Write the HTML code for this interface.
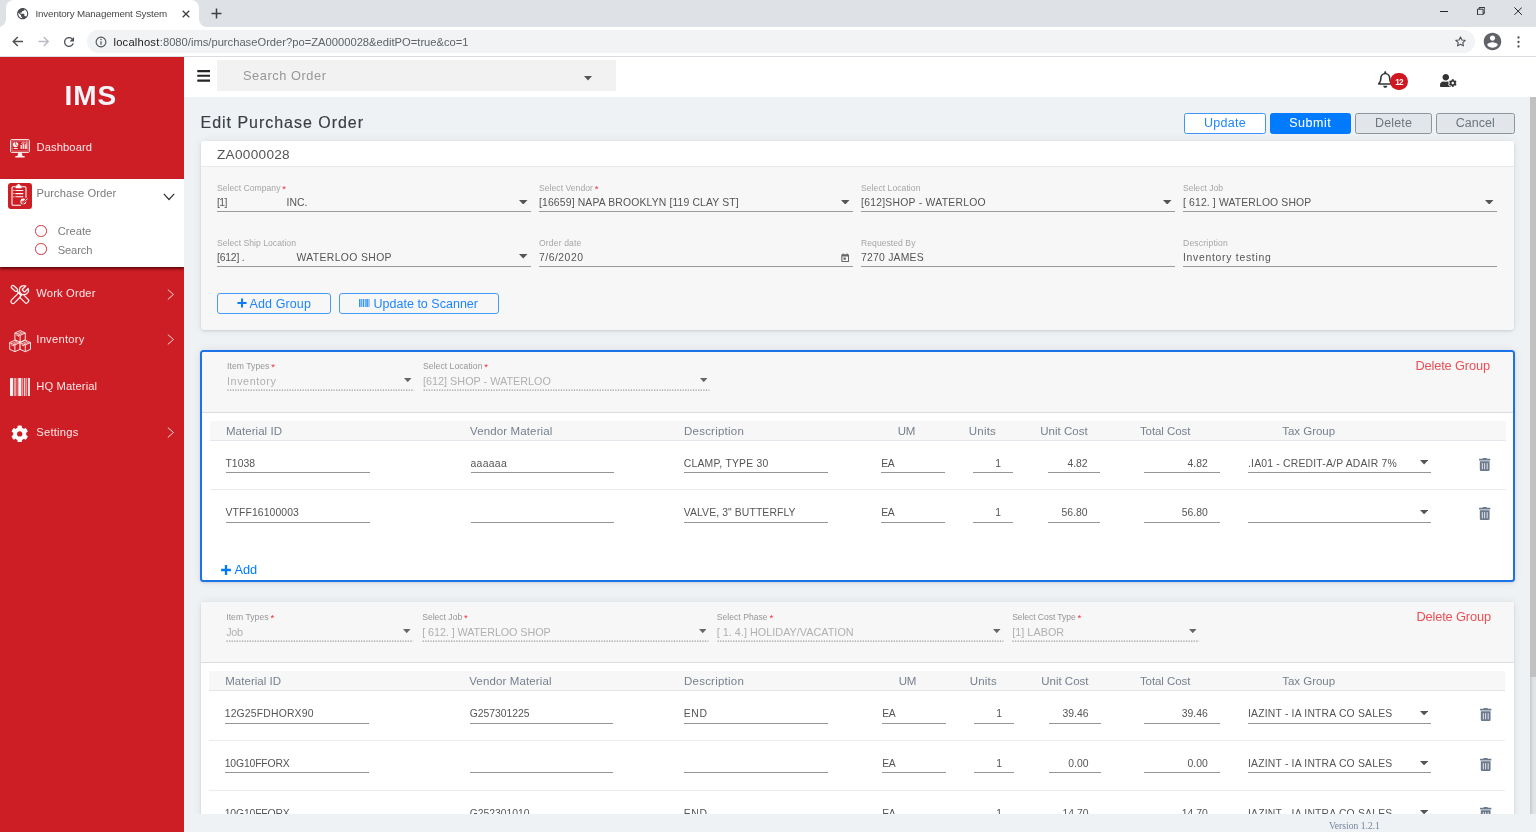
<!DOCTYPE html>
<html lang="en">
<head>
<meta charset="utf-8">
<title>Inventory Management System</title>
<style>
*{box-sizing:border-box;margin:0;padding:0}
html,body{width:1536px;height:832px;overflow:hidden;background:#eff2f5}
body{position:relative;font-family:"Liberation Sans",sans-serif;}
.t{position:absolute;white-space:nowrap;}
.ser{font-family:"Liberation Serif",serif}
</style>
</head>
<body>
<div id="root" style="position:absolute;left:0;top:0;width:1536px;height:832px;will-change:transform">
<div id="chrome" style="position:absolute;left:0;top:0;width:1536px;height:57px;background:#fff">
<div style="position:absolute;left:0px;top:0px;width:1536px;height:27px;background:#dee1e6"></div>
<div style="position:absolute;left:6px;top:0px;width:193px;height:27px;background:#fff;border-radius:8px 8px 0 0"></div>
<svg style="position:absolute;left:-2px;top:19px;" width="8" height="8" viewBox="0 0 8 8"><path d="M8 0 V8 H0 A8 8 0 0 0 8 0Z" fill="#fff"/></svg>
<svg style="position:absolute;left:199px;top:19px;" width="8" height="8" viewBox="0 0 8 8"><path d="M0 0 V8 H8 A8 8 0 0 1 0 0Z" fill="#fff"/></svg>
<svg style="position:absolute;left:15.8px;top:6.9px;" width="13.4" height="13.4" viewBox="0 0 24 24"><path fill="#4a4d51" d="M12 2C6.48 2 2 6.48 2 12s4.48 10 10 10 10-4.480 10-10S17.52 2 12 2zm-1 17.930c-3.950-.490-7-3.850-7-7.930 0-.620.080-1.210.210-1.790L9 15v1c0 1.100.9 2 2 2v1.930zm6.900-2.540c-.260-.810-1-1.390-1.900-1.390h-1v-3c0-.550-.450-1-1-1H8v-2h2c.550 0 1-.450 1-1V7h2c1.100 0 2-.9 2-2v-.410c2.930 1.190 5 4.060 5 7.410 0 2.080-.8 3.970-2.100 5.390z"/></svg>
<div class="t" style="top:9px;font-size:9.8px;line-height:9.8px;color:#45474a;letter-spacing:-0.153px;left:35.5px;">Inventory Management System</div>
<svg style="position:absolute;left:181.5px;top:9.5px;" width="8" height="8" viewBox="0 0 8 8"><path d="M0.700 0.700 L7.300 7.300 M7.300 0.700 L0.700 7.300" stroke="#3c4043" stroke-width="1.300" fill="none"/></svg>
<svg style="position:absolute;left:210.5px;top:8px;" width="11" height="11" viewBox="0 0 11 11"><path d="M5.500 0.500 V10.500 M0.500 5.500 H10.500" stroke="#3c4043" stroke-width="1.500" fill="none"/></svg>
<svg style="position:absolute;left:1440px;top:10px;" width="8.2" height="3" viewBox="0 0 10 3"><path d="M0 1.500 H10" stroke="#222" stroke-width="1.200"/></svg>
<svg style="position:absolute;left:1476.8px;top:7px;" width="8.3" height="8.3" viewBox="0 0 10 10"><path d="M0.600 2.600 H7.400 V9.400 H0.600Z M2.600 2.600 V0.600 H9.400 V7.400 H7.400" stroke="#222" stroke-width="1.100" fill="none"/></svg>
<svg style="position:absolute;left:1513.7px;top:7.2px;" width="8.3" height="8.3" viewBox="0 0 10 10"><path d="M0.500 0.500 L9.500 9.500 M9.500 0.500 L0.500 9.500" stroke="#222" stroke-width="1.200" fill="none"/></svg>
<div style="position:absolute;left:0px;top:56px;width:1536px;height:1px;background:#d9dce0"></div>
<svg style="position:absolute;left:12px;top:36px;" width="11.5" height="11" viewBox="0 0 12 11"><path d="M11.500 5.500 H1.500 M6 0.800 L1.300 5.500 L6 10.200" stroke="#4d5156" stroke-width="1.500" fill="none"/></svg>
<svg style="position:absolute;left:38px;top:36px;" width="11.5" height="11" viewBox="0 0 12 11"><path d="M0.500 5.500 H10.500 M6 0.800 L10.700 5.500 L6 10.200" stroke="#b9bcc0" stroke-width="1.500" fill="none"/></svg>
<svg style="position:absolute;left:63px;top:35.5px;" width="12" height="12" viewBox="0 0 24 24"><path fill="#4d5156" d="M17.650 6.350C16.200 4.900 14.210 4 12 4c-4.420 0-7.990 3.580-7.990 8s3.570 8 7.990 8c3.730 0 6.840-2.550 7.730-6h-2.080c-.820 2.330-3.040 4-5.650 4-3.310 0-6-2.690-6-6s2.690-6 6-6c1.660 0 3.140.690 4.220 1.780L13 11h7V4l-2.350 2.350z" transform="translate(-3 -3) scale(1.25)"/></svg>
<div style="position:absolute;left:86.5px;top:30px;width:1388px;height:23px;background:#f1f3f4;border-radius:11.5px"></div>
<svg style="position:absolute;left:94.5px;top:35.5px;" width="12" height="12" viewBox="0 0 12 12"><circle cx="6" cy="6" r="4.900" fill="none" stroke="#4d5156" stroke-width="1.100"/><path d="M6 5.300 V8.700" stroke="#4d5156" stroke-width="1.200"/><circle cx="6" cy="3.600" r="0.750" fill="#4d5156"/></svg>
<div class="t" style="top:37px;font-size:11.2px;line-height:11.2px;color:#202124;letter-spacing:0.199px;left:113.5px;">localhost</div>
<div class="t" style="top:37px;font-size:11.2px;line-height:11.2px;color:#5f6368;left:159.8px;">:8080/ims/purchaseOrder?po=ZA0000028&amp;editPO=true&amp;co=1</div>
<svg style="position:absolute;left:1454px;top:35px;" width="13" height="13" viewBox="0 0 24 24"><path fill="none" stroke="#4d5156" stroke-width="2" stroke-linejoin="round" d="M12 3.500l2.600 5.600 6.100.700-4.500 4.200 1.200 6.100L12 17.100 6.600 20.100l1.200-6.100L3.300 9.800l6.100-.700z"/></svg>
<svg style="position:absolute;left:1482.4px;top:31.2px;" width="21" height="21" viewBox="0 0 24 24"><path fill="#5f6368" d="M12 2C6.480 2 2 6.480 2 12s4.480 10 10 10 10-4.480 10-10S17.520 2 12 2zm0 3c1.660 0 3 1.340 3 3s-1.340 3-3 3-3-1.340-3-3 1.340-3 3-3zm0 14.200c-2.500 0-4.710-1.280-6-3.220.030-1.990 4-3.080 6-3.080 1.990 0 5.970 1.090 6 3.080-1.290 1.940-3.500 3.220-6 3.220z"/></svg>
<svg style="position:absolute;left:1517px;top:36px;" width="3" height="12" viewBox="0 0 3 12"><circle cx="1.500" cy="1.500" r="1.150" fill="#4d5156"/><circle cx="1.500" cy="6" r="1.150" fill="#4d5156"/><circle cx="1.500" cy="10.500" r="1.150" fill="#4d5156"/></svg>
</div>
<nav id="sidebar" style="position:absolute;left:0;top:57px;width:184px;height:775px;background:#cd1e25;overflow:hidden">
<div style="position:absolute;left:0px;top:121.5px;width:184px;height:88px;background:#fff;box-shadow:0 1.500px 2.500px rgba(60,0,0,.75)"></div>
</nav>
<h1 class="t" style="top:82px;font-size:28px;line-height:28px;color:#f1f5f9;letter-spacing:0.906px;font-weight:bold;left:64.5px;font-weight:bold;">IMS</h1>
<div class="t" style="top:142px;font-size:11.2px;line-height:11.2px;color:#fbe9ea;letter-spacing:0.106px;left:36.5px;">Dashboard</div>
<div style="position:absolute;left:8px;top:183px;width:24px;height:26px;background:#cd1e25;border-radius:3px"></div>
<div class="t" style="top:188px;font-size:11.2px;line-height:11.2px;color:#7b7b7b;letter-spacing:0.067px;left:36.5px;">Purchase Order</div>
<div class="t" style="top:226px;font-size:11.2px;line-height:11.2px;color:#7b7b7b;letter-spacing:-0.020px;left:57.75px;">Create</div>
<div class="t" style="top:245px;font-size:11.2px;line-height:11.2px;color:#7b7b7b;letter-spacing:-0.165px;left:57.75px;">Search</div>
<div style="position:absolute;left:35px;top:225px;width:11.5px;height:11.5px;border:1.200px solid #d5333b;border-radius:50%"></div>
<div style="position:absolute;left:35px;top:243.3px;width:11.5px;height:11.5px;border:1.200px solid #d5333b;border-radius:50%"></div>
<svg style="position:absolute;left:162.5px;top:192.5px;" width="12" height="8" viewBox="0 0 12 8"><path d="M0.800 0.800 L6 6.500 L11.200 0.800" stroke="#333" stroke-width="1.200" fill="none"/></svg>
<div class="t" style="top:288px;font-size:11.2px;line-height:11.2px;color:#fbe9ea;letter-spacing:0.173px;left:36.25px;">Work Order</div>
<div class="t" style="top:334px;font-size:11.2px;line-height:11.2px;color:#fbe9ea;letter-spacing:0.270px;left:36.25px;">Inventory</div>
<div class="t" style="top:381px;font-size:11.2px;line-height:11.2px;color:#fbe9ea;letter-spacing:0.114px;left:36.25px;">HQ Material</div>
<div class="t" style="top:427px;font-size:11.2px;line-height:11.2px;color:#fbe9ea;letter-spacing:0.223px;left:36.25px;">Settings</div>
<svg style="position:absolute;left:167px;top:288.5px;" width="7.5" height="11" viewBox="0 0 7.500 11"><path d="M0.800 0.600 L6.500 5.500 L0.800 10.400" stroke="#f6d6d8" stroke-width="1" fill="none"/></svg>
<svg style="position:absolute;left:167px;top:334.0px;" width="7.5" height="11" viewBox="0 0 7.500 11"><path d="M0.800 0.600 L6.500 5.500 L0.800 10.400" stroke="#f6d6d8" stroke-width="1" fill="none"/></svg>
<svg style="position:absolute;left:167px;top:427.0px;" width="7.5" height="11" viewBox="0 0 7.500 11"><path d="M0.800 0.600 L6.500 5.500 L0.800 10.400" stroke="#f6d6d8" stroke-width="1" fill="none"/></svg>
<div style="position:absolute;left:184px;top:57px;width:1352px;height:40px;background:#fff"></div>
<div style="position:absolute;left:217px;top:60px;width:399px;height:31px;background:#f2f2f2"></div>
<svg style="position:absolute;left:196.8px;top:69px;" width="13.6" height="13" viewBox="0 0 13.600 13"><g fill="#262626"><rect x="0.200" y="1.100" width="13.200" height="2.050" rx="0.600"/><rect x="0.200" y="5.800" width="13.200" height="2.050" rx="0.600"/><rect x="0.200" y="10.600" width="13.200" height="2.050" rx="0.600"/></g></svg>
<div class="t" style="top:70px;font-size:12.8px;line-height:12.8px;color:#979797;letter-spacing:0.555px;left:243px;">Search Order</div>
<svg style="position:absolute;left:584px;top:76px;" width="8" height="4.5" viewBox="0 0 8 4.500"><path d="M0 0 H8 L4 4.500Z" fill="#555"/></svg>
<svg style="position:absolute;left:1378px;top:70.5px;" width="14.5" height="17" viewBox="0 0 448 512"><path fill="#333" d="M439.390 362.290c-19.320-20.760-55.470-51.990-55.470-154.290 0-77.700-54.480-139.900-127.940-155.160V32c0-17.670-14.320-32-31.980-32s-31.980 14.330-31.980 32v20.840C118.560 68.100 64.080 130.300 64.080 208c0 102.300-36.150 133.530-55.470 154.290-6 6.450-8.660 14.160-8.610 21.710.110 16.400 12.980 32 32.100 32h383.800c19.120 0 32-15.600 32.100-32 .050-7.550-2.610-15.270-8.610-21.710zM67.530 368c21.220-27.970 44.420-74.330 44.530-159.420 0-.200-.060-.380-.060-.580 0-61.860 50.140-112 112-112s112 50.140 112 112c0 .200-.060.380-.060.580.110 85.100 23.310 131.460 44.530 159.420H67.530zM224 512c35.320 0 63.970-28.650 63.970-64H160.030c0 35.350 28.650 64 63.970 64z"/></svg>
<div style="position:absolute;left:1390.2px;top:72.8px;width:17.6px;height:17.6px;background:#d0161f;border-radius:50%"></div>
<div class="t" style="top:79px;font-size:8.2px;line-height:8.2px;color:#fff;letter-spacing:-0.600px;font-weight:bold;left:1099.1px;width:600px;text-align:center;">12</div>
<svg style="position:absolute;left:1440px;top:73.5px;" width="16.5" height="13.2" viewBox="0 0 640 512"><path fill="#333" d="M610.500 373.300c2.600-14.100 2.600-28.500 0-42.600l25.800-14.900c3-1.700 4.300-5.200 3.300-8.500-6.700-21.600-18.200-41.200-33.200-57.400-2.300-2.500-6-3.100-9-1.400l-25.800 14.900c-10.900-9.300-23.400-16.500-36.900-21.300v-29.800c0-3.400-2.400-6.400-5.700-7.100-22.300-5-45-4.800-66.200 0-3.300.7-5.700 3.700-5.700 7.100v29.800c-13.500 4.800-26 12-36.900 21.300l-25.800-14.900c-2.900-1.700-6.700-1.100-9 1.400-15 16.200-26.500 35.800-33.200 57.400-1 3.300.4 6.800 3.300 8.500l25.800 14.900c-2.600 14.100-2.600 28.500 0 42.600l-25.800 14.900c-3 1.700-4.300 5.200-3.300 8.500 6.700 21.600 18.200 41.100 33.200 57.400 2.300 2.500 6 3.100 9 1.400l25.800-14.900c10.900 9.300 23.400 16.500 36.900 21.300v29.800c0 3.400 2.400 6.400 5.700 7.100 22.300 5 45 4.800 66.200 0 3.300-.7 5.700-3.700 5.700-7.100v-29.800c13.500-4.800 26-12 36.900-21.300l25.800 14.900c2.900 1.700 6.700 1.100 9-1.400 15-16.200 26.500-35.800 33.200-57.400 1-3.300-.4-6.800-3.300-8.500l-25.800-14.900zM496 400.500c-26.800 0-48.500-21.800-48.500-48.500s21.800-48.500 48.500-48.500 48.500 21.800 48.500 48.500-21.700 48.500-48.500 48.500zM224 256c70.700 0 128-57.300 128-128S294.700 0 224 0 96 57.300 96 128s57.300 128 128 128zm201.200 226.500c-2.300-1.200-4.600-2.600-6.800-3.900l-7.900 4.600c-6 3.400-12.800 5.300-19.600 5.300-10.900 0-21.400-4.600-28.900-12.600-18.300-19.800-32.300-43.900-40.200-69.600-5.500-17.700 1.900-36.400 17.900-45.700l7.900-4.600c-.1-2.600-.1-5.200 0-7.800l-7.900-4.600c-16-9.200-23.400-28-17.900-45.700.9-2.900 2.200-5.800 3.200-8.700-3.800-.3-7.500-1.200-11.400-1.200h-16.700c-22.200 10.200-46.900 16-72.900 16s-50.600-5.800-72.900-16h-16.700C60.200 288 0 348.200 0 422.400V464c0 26.500 21.500 48 48 48h352c10.100 0 19.500-3.200 27.200-8.500-1.200-3.800-2-7.700-2-11.800v-9.200z"/></svg>
<div style="position:absolute;left:1530.3px;top:97px;width:5.7px;height:717px;background:linear-gradient(90deg,#c6c7ca 0,#d2d4d7 1.500px,#dee1e5 3px,#e0e3e7 100%)"></div>
<div style="position:absolute;left:1530.3px;top:97px;width:5.7px;height:580px;background:#c1c1c1"></div>
<h2 class="t" style="top:115px;font-size:16px;line-height:16px;color:#3b3f44;letter-spacing:0.976px;left:200.5px;font-weight:normal;-webkit-text-stroke:0.180px #3b3f44;">Edit Purchase Order</h2>
<div style="position:absolute;left:1184px;top:112.5px;width:82px;height:21px;background:#fff;border:1px solid #3d95fc;border-radius:2.500px"></div>
<div class="t" style="top:117px;font-size:12.5px;line-height:12.5px;color:#1c85ff;letter-spacing:0.282px;left:925.0px;width:600px;text-align:center;">Update</div>
<div style="position:absolute;left:1269.5px;top:112.5px;width:81.5px;height:21px;background:#007bff;border:1px solid #007bff;border-radius:2.500px"></div>
<div class="t" style="top:117px;font-size:12.5px;line-height:12.5px;color:#fff;letter-spacing:0.516px;left:1010.25px;width:600px;text-align:center;-webkit-text-stroke:0.060px #fff;">Submit</div>
<div style="position:absolute;left:1355px;top:112.5px;width:77px;height:21px;background:#e2e6ea;border:1px solid #8d949b;border-radius:2.500px"></div>
<div class="t" style="top:117px;font-size:12.5px;line-height:12.5px;color:#6c757d;letter-spacing:0.144px;left:1093.5px;width:600px;text-align:center;">Delete</div>
<div style="position:absolute;left:1436px;top:112.5px;width:78.5px;height:21px;background:#e2e6ea;border:1px solid #8d949b;border-radius:2.500px"></div>
<div class="t" style="top:117px;font-size:12.5px;line-height:12.5px;color:#6c757d;letter-spacing:0.015px;left:1175.25px;width:600px;text-align:center;">Cancel</div>
<div style="position:absolute;left:201px;top:141px;width:1313px;height:188.5px;background:#f7f7f7;border-radius:3px;box-shadow:0 1px 3px rgba(0,0,0,.13),0 0 10px rgba(0,0,0,.07)"></div>
<div style="position:absolute;left:201px;top:141px;width:1313px;height:26px;background:#fff;border-radius:3px 3px 0 0;border-bottom:1px solid #e9e9e9"></div>
<div class="t" style="top:148px;font-size:13.6px;line-height:13.6px;color:#555;letter-spacing:0.297px;left:217px;">ZA0000028</div>
<div class="t" style="top:184px;font-size:8.6px;line-height:8.6px;color:#a6a6a6;letter-spacing:0.029px;left:217px;">Select Company</div>
<div class="t" style="top:184px;font-size:9.5px;line-height:9.5px;color:#ee3239;left:282.3px;">*</div>
<div class="t" style="top:198px;font-size:10.4px;line-height:10.4px;color:#555;letter-spacing:-0.521px;left:217px;">[1]</div>
<div class="t" style="top:198px;font-size:10.4px;line-height:10.4px;color:#555;letter-spacing:0.050px;left:286.5px;">INC.</div>
<div style="position:absolute;left:217px;top:211px;width:314px;height:1px;background:#999"></div>
<svg style="position:absolute;left:519px;top:199.8px;" width="8.5" height="4.5" viewBox="0 0 8.500 4.500"><path d="M0 0 H8.500 L4.250 4.500Z" fill="#555"/></svg>
<div class="t" style="top:184px;font-size:8.6px;line-height:8.6px;color:#a6a6a6;letter-spacing:0.035px;left:539px;">Select Vendor</div>
<div class="t" style="top:184px;font-size:9.5px;line-height:9.5px;color:#ee3239;left:594.8px;">*</div>
<div class="t" style="top:198px;font-size:10.4px;line-height:10.4px;color:#555;letter-spacing:0.143px;left:539px;">[16659] NAPA BROOKLYN [119 CLAY ST]</div>
<div style="position:absolute;left:539px;top:211px;width:314px;height:1px;background:#999"></div>
<svg style="position:absolute;left:841px;top:199.8px;" width="8.5" height="4.5" viewBox="0 0 8.500 4.500"><path d="M0 0 H8.500 L4.250 4.500Z" fill="#555"/></svg>
<div class="t" style="top:184px;font-size:8.6px;line-height:8.6px;color:#a6a6a6;letter-spacing:0.046px;left:861px;">Select Location</div>
<div class="t" style="top:198px;font-size:10.4px;line-height:10.4px;color:#555;letter-spacing:0.249px;left:861px;">[612]SHOP - WATERLOO</div>
<div style="position:absolute;left:861px;top:211px;width:314px;height:1px;background:#999"></div>
<svg style="position:absolute;left:1163px;top:199.8px;" width="8.5" height="4.5" viewBox="0 0 8.500 4.500"><path d="M0 0 H8.500 L4.250 4.500Z" fill="#555"/></svg>
<div class="t" style="top:184px;font-size:8.6px;line-height:8.6px;color:#a6a6a6;letter-spacing:-0.016px;left:1183px;">Select Job</div>
<div class="t" style="top:198px;font-size:10.4px;line-height:10.4px;color:#555;letter-spacing:0.140px;left:1183px;">[ 612. ] WATERLOO SHOP</div>
<div style="position:absolute;left:1183px;top:211px;width:314px;height:1px;background:#999"></div>
<svg style="position:absolute;left:1485px;top:199.8px;" width="8.5" height="4.5" viewBox="0 0 8.500 4.500"><path d="M0 0 H8.500 L4.250 4.500Z" fill="#555"/></svg>
<div class="t" style="top:239px;font-size:8.6px;line-height:8.6px;color:#a6a6a6;letter-spacing:0.030px;left:217px;">Select Ship Location</div>
<div class="t" style="top:253px;font-size:10.4px;line-height:10.4px;color:#555;letter-spacing:-0.201px;left:217px;">[612] .</div>
<div class="t" style="top:253px;font-size:10.4px;line-height:10.4px;color:#555;letter-spacing:0.368px;left:296.5px;">WATERLOO SHOP</div>
<div style="position:absolute;left:217px;top:266px;width:314px;height:1px;background:#999"></div>
<svg style="position:absolute;left:519px;top:254.3px;" width="8.5" height="4.5" viewBox="0 0 8.500 4.500"><path d="M0 0 H8.500 L4.250 4.500Z" fill="#555"/></svg>
<div class="t" style="top:239px;font-size:8.6px;line-height:8.6px;color:#a6a6a6;letter-spacing:0.139px;left:539px;">Order date</div>
<div class="t" style="top:253px;font-size:10.4px;line-height:10.4px;color:#555;letter-spacing:0.502px;left:539px;">7/6/2020</div>
<div style="position:absolute;left:539px;top:266px;width:314px;height:1px;background:#999"></div>
<div class="t" style="top:239px;font-size:8.6px;line-height:8.6px;color:#a6a6a6;letter-spacing:0.040px;left:861px;">Requested By</div>
<div class="t" style="top:253px;font-size:10.4px;line-height:10.4px;color:#555;letter-spacing:0.230px;left:861px;">7270 JAMES</div>
<div style="position:absolute;left:861px;top:266px;width:314px;height:1px;background:#999"></div>
<div class="t" style="top:239px;font-size:8.6px;line-height:8.6px;color:#a6a6a6;letter-spacing:0.180px;left:1183px;">Description</div>
<div class="t" style="top:253px;font-size:10.4px;line-height:10.4px;color:#555;letter-spacing:0.717px;left:1183px;">Inventory testing</div>
<div style="position:absolute;left:1183px;top:266px;width:314px;height:1px;background:#999"></div>
<svg style="position:absolute;left:840.9px;top:253.3px;" width="8.4" height="9.2" viewBox="0 0 15 16"><path fill="#666" d="M12.500 2H12V0.500h-2V2H5V0.500H3V2H2.500C1.400 2 0.500 2.900 0.500 4v10c0 1.100.900 2 2 2h10c1.100 0 2-.900 2-2V4c0-1.100-.900-2-2-2zm0 12h-10V6h10v8zM4.500 8h4v4h-4z"/></svg>
<div style="position:absolute;left:217px;top:293px;width:113.5px;height:20.5px;border:1px solid #459cfb;border-radius:3px"></div>
<svg style="position:absolute;left:236.5px;top:298px;" width="10" height="10" viewBox="0 0 10 10"><path d="M5 1.200 V8.800 M1.200 5 H8.800" stroke="#0a7cff" stroke-width="2" stroke-linecap="round" fill="none"/></svg>
<div class="t" style="top:298px;font-size:12.5px;line-height:12.5px;color:#1c85ff;letter-spacing:0.116px;left:249.5px;">Add Group</div>
<div style="position:absolute;left:339px;top:293px;width:159.5px;height:20.5px;border:1px solid #459cfb;border-radius:3px"></div>
<svg style="position:absolute;left:358.5px;top:298.5px;" width="11.5" height="8.5" viewBox="0 0 11.500 8.500"><g fill="#007bff" opacity=".8"><rect x="0" width="1.500" height="8.500"/><rect x="2.200" width="0.800" height="8.500"/><rect x="3.700" width="1.500" height="8.500"/><rect x="5.900" width="0.800" height="8.500"/><rect x="7.300" width="1.600" height="8.500"/><rect x="9.500" width="0.700" height="8.500"/><rect x="10.700" width="0.800" height="8.500"/></g></svg>
<div class="t" style="top:298px;font-size:12.5px;line-height:12.5px;color:#1c85ff;letter-spacing:0.015px;left:373.5px;">Update to Scanner</div>
<div style="position:absolute;left:200px;top:350px;width:1314.5px;height:231.5px;background:#fff;border:2px solid #1a73e8;border-radius:3.500px;box-shadow:0 1px 3px rgba(0,0,0,.10),0 0 10px rgba(0,0,0,.07)"></div>
<div style="position:absolute;left:202px;top:352px;width:1310.5px;height:60.5px;background:#f7f7f7;border-bottom:1px solid #dcdcdc;border-radius:2px 2px 0 0"></div>
<div class="t" style="top:362px;font-size:8.6px;line-height:8.6px;color:#969696;letter-spacing:0.060px;left:227px;">Item Types</div>
<div class="t" style="top:362px;font-size:9.5px;line-height:9.5px;color:#ee3239;left:271.3px;">*</div>
<div class="t" style="top:376px;font-size:10.8px;line-height:10.8px;color:#b0b0b0;letter-spacing:0.564px;left:227px;">Inventory</div>
<svg style="position:absolute;left:227px;top:389.4px;" width="187.5" height="2.4" viewBox="0 0 187.5 2.400"><path d="M0 1.200 H187.5" stroke="#9c9c9c" stroke-width="1.250" stroke-dasharray="1.300 1.300" fill="none"/></svg>
<svg style="position:absolute;left:404.0px;top:378px;" width="7.5" height="4.2" viewBox="0 0 7.500 4.200"><path d="M0 0 H7.500 L3.750 4.200Z" fill="#666"/></svg>
<div class="t" style="top:362px;font-size:8.6px;line-height:8.6px;color:#969696;letter-spacing:0.046px;left:423px;">Select Location</div>
<div class="t" style="top:362px;font-size:9.5px;line-height:9.5px;color:#ee3239;left:484.3px;">*</div>
<div class="t" style="top:376px;font-size:10.8px;line-height:10.8px;color:#b0b0b0;letter-spacing:0.017px;left:423px;">[612] SHOP - WATERLOO</div>
<svg style="position:absolute;left:423px;top:389.4px;" width="287" height="2.4" viewBox="0 0 287 2.400"><path d="M0 1.200 H287" stroke="#9c9c9c" stroke-width="1.250" stroke-dasharray="1.300 1.300" fill="none"/></svg>
<svg style="position:absolute;left:699.5px;top:378px;" width="7.5" height="4.2" viewBox="0 0 7.500 4.200"><path d="M0 0 H7.500 L3.750 4.200Z" fill="#666"/></svg>
<div class="t" style="top:360px;font-size:12.8px;line-height:12.8px;color:#ea4f56;letter-spacing:-0.128px;left:1415.4px;">Delete Group</div>
<div style="position:absolute;left:209.5px;top:420.5px;width:1296px;height:20px;background:#f7f7f7;border-bottom:1px solid #e3e6ea"></div>
<div class="t" style="top:426px;font-size:11.5px;line-height:11.5px;color:#77818f;letter-spacing:0.037px;left:226px;">Material ID</div>
<div class="t" style="top:426px;font-size:11.5px;line-height:11.5px;color:#77818f;letter-spacing:0.130px;left:470px;">Vendor Material</div>
<div class="t" style="top:426px;font-size:11.5px;line-height:11.5px;color:#77818f;letter-spacing:0.225px;left:684px;">Description</div>
<div class="t" style="top:426px;font-size:11.5px;line-height:11.5px;color:#77818f;letter-spacing:-0.243px;left:897.8px;">UM</div>
<div class="t" style="top:426px;font-size:11.5px;line-height:11.5px;color:#77818f;letter-spacing:0.200px;left:968.8px;">Units</div>
<div class="t" style="top:426px;font-size:11.5px;line-height:11.5px;color:#77818f;left:1040.3px;">Unit Cost</div>
<div class="t" style="top:426px;font-size:11.5px;line-height:11.5px;color:#77818f;letter-spacing:-0.073px;left:1139.9px;">Total Cost</div>
<div class="t" style="top:426px;font-size:11.5px;line-height:11.5px;color:#77818f;letter-spacing:-0.039px;left:1282.3px;">Tax Group</div>
<div class="t" style="top:459px;font-size:10.4px;line-height:10.4px;color:#555;left:225.5px;">T1038</div>
<div style="position:absolute;left:225.5px;top:472.0px;width:144px;height:1px;background:#959595"></div>
<div class="t" style="top:459px;font-size:10.4px;line-height:10.4px;color:#555;letter-spacing:0.299px;left:470.5px;">aaaaaa</div>
<div style="position:absolute;left:470.5px;top:472.0px;width:143.5px;height:1px;background:#959595"></div>
<div class="t" style="top:459px;font-size:10.4px;line-height:10.4px;color:#555;letter-spacing:0.235px;left:683.7px;">CLAMP, TYPE 30</div>
<div style="position:absolute;left:683.7px;top:472.0px;width:144px;height:1px;background:#959595"></div>
<div class="t" style="top:459px;font-size:10.4px;line-height:10.4px;color:#555;letter-spacing:-0.437px;left:881.3px;">EA</div>
<div style="position:absolute;left:881.3px;top:472.0px;width:64px;height:1px;background:#959595"></div>
<div class="t" style="top:459px;font-size:10.4px;line-height:10.4px;color:#555;right:535px;text-align:right;">1</div>
<div style="position:absolute;left:972.8px;top:472.0px;width:40px;height:1px;background:#959595"></div>
<div class="t" style="top:459px;font-size:10.4px;line-height:10.4px;color:#555;right:448.4000000000001px;text-align:right;">4.82</div>
<div style="position:absolute;left:1048.3px;top:472.0px;width:52px;height:1px;background:#959595"></div>
<div class="t" style="top:459px;font-size:10.4px;line-height:10.4px;color:#555;right:328.29999999999995px;text-align:right;">4.82</div>
<div style="position:absolute;left:1143.9px;top:472.0px;width:76px;height:1px;background:#959595"></div>
<div class="t" style="top:459px;font-size:10.4px;line-height:10.4px;color:#555;letter-spacing:0.195px;left:1248px;">.IA01 - CREDIT-A/P ADAIR 7%</div>
<div style="position:absolute;left:1248px;top:472.0px;width:183px;height:1px;background:#959595"></div>
<svg style="position:absolute;left:1420.3px;top:460.2px;" width="8.2" height="4.4" viewBox="0 0 8.200 4.400"><path d="M0 0 H8.200 L4.100 4.400Z" fill="#555"/></svg>
<svg style="position:absolute;left:1479.3px;top:457.5px;" width="11.4" height="13" viewBox="0 0 448 512"><path fill="#6b798c" d="M32 464a48 48 0 0 0 48 48h288a48 48 0 0 0 48-48V128H32zm272-256a16 16 0 0 1 32 0v224a16 16 0 0 1-32 0zm-96 0a16 16 0 0 1 32 0v224a16 16 0 0 1-32 0zm-96 0a16 16 0 0 1 32 0v224a16 16 0 0 1-32 0zM432 32H312l-9.400-18.700A24 24 0 0 0 281.100 0H166.800a23.720 23.720 0 0 0-21.400 13.300L136 32H16A16 16 0 0 0 0 48v32a16 16 0 0 0 16 16h416a16 16 0 0 0 16-16V48a16 16 0 0 0-16-16z"/></svg>
<div style="position:absolute;left:209.5px;top:489.3px;width:1296px;height:1px;background:#e9ecef"></div>
<div class="t" style="top:508px;font-size:10.4px;line-height:10.4px;color:#555;letter-spacing:0.103px;left:225.5px;">VTFF16100003</div>
<div style="position:absolute;left:225.5px;top:521.6px;width:144px;height:1px;background:#959595"></div>
<div style="position:absolute;left:470.5px;top:521.6px;width:143.5px;height:1px;background:#959595"></div>
<div class="t" style="top:508px;font-size:10.4px;line-height:10.4px;color:#555;letter-spacing:0.103px;left:683.7px;">VALVE, 3" BUTTERFLY</div>
<div style="position:absolute;left:683.7px;top:521.6px;width:144px;height:1px;background:#959595"></div>
<div class="t" style="top:508px;font-size:10.4px;line-height:10.4px;color:#555;letter-spacing:-0.437px;left:881.3px;">EA</div>
<div style="position:absolute;left:881.3px;top:521.6px;width:64px;height:1px;background:#959595"></div>
<div class="t" style="top:508px;font-size:10.4px;line-height:10.4px;color:#555;right:535px;text-align:right;">1</div>
<div style="position:absolute;left:972.8px;top:521.6px;width:40px;height:1px;background:#959595"></div>
<div class="t" style="top:508px;font-size:10.4px;line-height:10.4px;color:#555;right:448.4000000000001px;text-align:right;">56.80</div>
<div style="position:absolute;left:1048.3px;top:521.6px;width:52px;height:1px;background:#959595"></div>
<div class="t" style="top:508px;font-size:10.4px;line-height:10.4px;color:#555;right:328.29999999999995px;text-align:right;">56.80</div>
<div style="position:absolute;left:1143.9px;top:521.6px;width:76px;height:1px;background:#959595"></div>
<div style="position:absolute;left:1248px;top:521.6px;width:183px;height:1px;background:#959595"></div>
<svg style="position:absolute;left:1420.3px;top:509.8px;" width="8.2" height="4.4" viewBox="0 0 8.200 4.400"><path d="M0 0 H8.200 L4.100 4.400Z" fill="#555"/></svg>
<svg style="position:absolute;left:1479.3px;top:507.1px;" width="11.4" height="13" viewBox="0 0 448 512"><path fill="#6b798c" d="M32 464a48 48 0 0 0 48 48h288a48 48 0 0 0 48-48V128H32zm272-256a16 16 0 0 1 32 0v224a16 16 0 0 1-32 0zm-96 0a16 16 0 0 1 32 0v224a16 16 0 0 1-32 0zm-96 0a16 16 0 0 1 32 0v224a16 16 0 0 1-32 0zM432 32H312l-9.400-18.700A24 24 0 0 0 281.100 0H166.800a23.720 23.720 0 0 0-21.400 13.300L136 32H16A16 16 0 0 0 0 48v32a16 16 0 0 0 16 16h416a16 16 0 0 0 16-16V48a16 16 0 0 0-16-16z"/></svg>
<svg style="position:absolute;left:221.4px;top:564.5px;" width="10" height="10" viewBox="0 0 10 10"><path d="M5 0.100 V9.900 M0.100 5 H9.900" stroke="#007bff" stroke-width="2.300" fill="none"/></svg>
<div class="t" style="top:564px;font-size:12.8px;line-height:12.8px;color:#007bff;letter-spacing:0.008px;left:234.4px;">Add</div>
<div style="position:absolute;left:201px;top:601.7px;width:1313px;height:260px;background:#fff;border-radius:3px;box-shadow:0 1px 3px rgba(0,0,0,.13),0 0 10px rgba(0,0,0,.07)"></div>
<div style="position:absolute;left:201px;top:601.7px;width:1313px;height:61.5px;background:#f7f7f7;border-bottom:1px solid #dcdcdc;border-radius:3px 3px 0 0"></div>
<div class="t" style="top:613px;font-size:8.6px;line-height:8.6px;color:#969696;letter-spacing:0.060px;left:226.2px;">Item Types</div>
<div class="t" style="top:613px;font-size:9.5px;line-height:9.5px;color:#ee3239;left:270.5px;">*</div>
<div class="t" style="top:627px;font-size:10.8px;line-height:10.8px;color:#b0b0b0;letter-spacing:-0.304px;left:226.2px;">Job</div>
<svg style="position:absolute;left:226.2px;top:640.1px;" width="187.5" height="2.4" viewBox="0 0 187.5 2.400"><path d="M0 1.200 H187.5" stroke="#9c9c9c" stroke-width="1.250" stroke-dasharray="1.300 1.300" fill="none"/></svg>
<svg style="position:absolute;left:403.2px;top:628.7px;" width="7.5" height="4.2" viewBox="0 0 7.500 4.200"><path d="M0 0 H7.500 L3.750 4.200Z" fill="#666"/></svg>
<div class="t" style="top:613px;font-size:8.6px;line-height:8.6px;color:#969696;letter-spacing:-0.016px;left:422.2px;">Select Job</div>
<div class="t" style="top:613px;font-size:9.5px;line-height:9.5px;color:#ee3239;left:464.0px;">*</div>
<div class="t" style="top:627px;font-size:10.8px;line-height:10.8px;color:#b0b0b0;letter-spacing:-0.079px;left:422.2px;">[ 612. ] WATERLOO SHOP</div>
<svg style="position:absolute;left:422.2px;top:640.1px;" width="287" height="2.4" viewBox="0 0 287 2.400"><path d="M0 1.200 H287" stroke="#9c9c9c" stroke-width="1.250" stroke-dasharray="1.300 1.300" fill="none"/></svg>
<svg style="position:absolute;left:698.7px;top:628.7px;" width="7.5" height="4.2" viewBox="0 0 7.500 4.200"><path d="M0 0 H7.500 L3.750 4.200Z" fill="#666"/></svg>
<div class="t" style="top:613px;font-size:8.6px;line-height:8.6px;color:#969696;letter-spacing:0.027px;left:716.7px;">Select Phase</div>
<div class="t" style="top:613px;font-size:9.5px;line-height:9.5px;color:#ee3239;left:769.5px;">*</div>
<div class="t" style="top:627px;font-size:10.8px;line-height:10.8px;color:#b0b0b0;letter-spacing:0.031px;left:716.7px;">[ 1. 4.] HOLIDAY/VACATION</div>
<svg style="position:absolute;left:716.7px;top:640.1px;" width="287" height="2.4" viewBox="0 0 287 2.400"><path d="M0 1.200 H287" stroke="#9c9c9c" stroke-width="1.250" stroke-dasharray="1.300 1.300" fill="none"/></svg>
<svg style="position:absolute;left:993.2px;top:628.7px;" width="7.5" height="4.2" viewBox="0 0 7.500 4.200"><path d="M0 0 H7.500 L3.750 4.200Z" fill="#666"/></svg>
<div class="t" style="top:613px;font-size:8.6px;line-height:8.6px;color:#969696;letter-spacing:-0.085px;left:1012.2px;">Select Cost Type</div>
<div class="t" style="top:613px;font-size:9.5px;line-height:9.5px;color:#ee3239;left:1077.5px;">*</div>
<div class="t" style="top:627px;font-size:10.8px;line-height:10.8px;color:#b0b0b0;letter-spacing:0.042px;left:1012.2px;">[1] LABOR</div>
<svg style="position:absolute;left:1012.2px;top:640.1px;" width="187.5" height="2.4" viewBox="0 0 187.5 2.400"><path d="M0 1.200 H187.5" stroke="#9c9c9c" stroke-width="1.250" stroke-dasharray="1.300 1.300" fill="none"/></svg>
<svg style="position:absolute;left:1189.2px;top:628.7px;" width="7.5" height="4.2" viewBox="0 0 7.500 4.200"><path d="M0 0 H7.500 L3.750 4.200Z" fill="#666"/></svg>
<div class="t" style="top:611px;font-size:12.8px;line-height:12.8px;color:#ea4f56;letter-spacing:-0.128px;left:1416.4px;">Delete Group</div>
<div style="position:absolute;left:208.7px;top:671.2px;width:1296.8px;height:20px;background:#f7f7f7;border-bottom:1px solid #e3e6ea"></div>
<div class="t" style="top:676px;font-size:11.5px;line-height:11.5px;color:#77818f;letter-spacing:0.037px;left:225.2px;">Material ID</div>
<div class="t" style="top:676px;font-size:11.5px;line-height:11.5px;color:#77818f;letter-spacing:0.130px;left:469.2px;">Vendor Material</div>
<div class="t" style="top:676px;font-size:11.5px;line-height:11.5px;color:#77818f;letter-spacing:0.225px;left:684px;">Description</div>
<div class="t" style="top:676px;font-size:11.5px;line-height:11.5px;color:#77818f;letter-spacing:-0.243px;left:898.6999999999999px;">UM</div>
<div class="t" style="top:676px;font-size:11.5px;line-height:11.5px;color:#77818f;letter-spacing:0.200px;left:969.6999999999999px;">Units</div>
<div class="t" style="top:676px;font-size:11.5px;line-height:11.5px;color:#77818f;left:1041.2px;">Unit Cost</div>
<div class="t" style="top:676px;font-size:11.5px;line-height:11.5px;color:#77818f;letter-spacing:-0.073px;left:1139.9px;">Total Cost</div>
<div class="t" style="top:676px;font-size:11.5px;line-height:11.5px;color:#77818f;letter-spacing:-0.039px;left:1282.3px;">Tax Group</div>
<div class="t" style="top:709px;font-size:10.4px;line-height:10.4px;color:#555;letter-spacing:0.176px;left:224.7px;">12G25FDHORX90</div>
<div style="position:absolute;left:224.7px;top:722.7px;width:144px;height:1px;background:#959595"></div>
<div class="t" style="top:709px;font-size:10.4px;line-height:10.4px;color:#555;letter-spacing:-0.015px;left:469.7px;">G257301225</div>
<div style="position:absolute;left:469.7px;top:722.7px;width:143.5px;height:1px;background:#959595"></div>
<div class="t" style="top:709px;font-size:10.4px;line-height:10.4px;color:#555;letter-spacing:0.680px;left:683.7px;">END</div>
<div style="position:absolute;left:683.7px;top:722.7px;width:144px;height:1px;background:#959595"></div>
<div class="t" style="top:709px;font-size:10.4px;line-height:10.4px;color:#555;letter-spacing:-0.437px;left:882.1999999999999px;">EA</div>
<div style="position:absolute;left:882.1999999999999px;top:722.7px;width:64px;height:1px;background:#959595"></div>
<div class="t" style="top:709px;font-size:10.4px;line-height:10.4px;color:#555;right:534.1px;text-align:right;">1</div>
<div style="position:absolute;left:973.6999999999999px;top:722.7px;width:40px;height:1px;background:#959595"></div>
<div class="t" style="top:709px;font-size:10.4px;line-height:10.4px;color:#555;right:447.5px;text-align:right;">39.46</div>
<div style="position:absolute;left:1049.2px;top:722.7px;width:52px;height:1px;background:#959595"></div>
<div class="t" style="top:709px;font-size:10.4px;line-height:10.4px;color:#555;right:328.29999999999995px;text-align:right;">39.46</div>
<div style="position:absolute;left:1143.9px;top:722.7px;width:76px;height:1px;background:#959595"></div>
<div class="t" style="top:709px;font-size:10.4px;line-height:10.4px;color:#555;letter-spacing:0.186px;left:1248px;">IAZINT - IA INTRA CO SALES</div>
<div style="position:absolute;left:1248px;top:722.7px;width:183px;height:1px;background:#959595"></div>
<svg style="position:absolute;left:1420.3px;top:710.9000000000001px;" width="8.2" height="4.4" viewBox="0 0 8.200 4.400"><path d="M0 0 H8.200 L4.100 4.400Z" fill="#555"/></svg>
<svg style="position:absolute;left:1480.2px;top:708.2px;" width="11.4" height="13" viewBox="0 0 448 512"><path fill="#6b798c" d="M32 464a48 48 0 0 0 48 48h288a48 48 0 0 0 48-48V128H32zm272-256a16 16 0 0 1 32 0v224a16 16 0 0 1-32 0zm-96 0a16 16 0 0 1 32 0v224a16 16 0 0 1-32 0zm-96 0a16 16 0 0 1 32 0v224a16 16 0 0 1-32 0zM432 32H312l-9.400-18.700A24 24 0 0 0 281.100 0H166.800a23.720 23.720 0 0 0-21.400 13.300L136 32H16A16 16 0 0 0 0 48v32a16 16 0 0 0 16 16h416a16 16 0 0 0 16-16V48a16 16 0 0 0-16-16z"/></svg>
<div style="position:absolute;left:208.7px;top:740.0px;width:1296.8px;height:1px;background:#e9ecef"></div>
<div class="t" style="top:759px;font-size:10.4px;line-height:10.4px;color:#555;letter-spacing:-0.147px;left:224.7px;">10G10FFORX</div>
<div style="position:absolute;left:224.7px;top:772.3000000000001px;width:144px;height:1px;background:#959595"></div>
<div style="position:absolute;left:469.7px;top:772.3000000000001px;width:143.5px;height:1px;background:#959595"></div>
<div style="position:absolute;left:683.7px;top:772.3000000000001px;width:144px;height:1px;background:#959595"></div>
<div class="t" style="top:759px;font-size:10.4px;line-height:10.4px;color:#555;letter-spacing:-0.437px;left:882.1999999999999px;">EA</div>
<div style="position:absolute;left:882.1999999999999px;top:772.3000000000001px;width:64px;height:1px;background:#959595"></div>
<div class="t" style="top:759px;font-size:10.4px;line-height:10.4px;color:#555;right:534.1px;text-align:right;">1</div>
<div style="position:absolute;left:973.6999999999999px;top:772.3000000000001px;width:40px;height:1px;background:#959595"></div>
<div class="t" style="top:759px;font-size:10.4px;line-height:10.4px;color:#555;right:447.5px;text-align:right;">0.00</div>
<div style="position:absolute;left:1049.2px;top:772.3000000000001px;width:52px;height:1px;background:#959595"></div>
<div class="t" style="top:759px;font-size:10.4px;line-height:10.4px;color:#555;right:328.29999999999995px;text-align:right;">0.00</div>
<div style="position:absolute;left:1143.9px;top:772.3000000000001px;width:76px;height:1px;background:#959595"></div>
<div class="t" style="top:759px;font-size:10.4px;line-height:10.4px;color:#555;letter-spacing:0.186px;left:1248px;">IAZINT - IA INTRA CO SALES</div>
<div style="position:absolute;left:1248px;top:772.3000000000001px;width:183px;height:1px;background:#959595"></div>
<svg style="position:absolute;left:1420.3px;top:760.5000000000001px;" width="8.2" height="4.4" viewBox="0 0 8.200 4.400"><path d="M0 0 H8.200 L4.100 4.400Z" fill="#555"/></svg>
<svg style="position:absolute;left:1480.2px;top:757.8000000000001px;" width="11.4" height="13" viewBox="0 0 448 512"><path fill="#6b798c" d="M32 464a48 48 0 0 0 48 48h288a48 48 0 0 0 48-48V128H32zm272-256a16 16 0 0 1 32 0v224a16 16 0 0 1-32 0zm-96 0a16 16 0 0 1 32 0v224a16 16 0 0 1-32 0zm-96 0a16 16 0 0 1 32 0v224a16 16 0 0 1-32 0zM432 32H312l-9.400-18.700A24 24 0 0 0 281.100 0H166.800a23.720 23.720 0 0 0-21.400 13.300L136 32H16A16 16 0 0 0 0 48v32a16 16 0 0 0 16 16h416a16 16 0 0 0 16-16V48a16 16 0 0 0-16-16z"/></svg>
<div style="position:absolute;left:208.7px;top:789.6px;width:1296.8px;height:1px;background:#e9ecef"></div>
<div class="t" style="top:809px;font-size:10.4px;line-height:10.4px;color:#555;letter-spacing:-0.147px;left:224.7px;">10G10FFORX</div>
<div style="position:absolute;left:224.7px;top:821.9000000000001px;width:144px;height:1px;background:#959595"></div>
<div class="t" style="top:809px;font-size:10.4px;line-height:10.4px;color:#555;letter-spacing:-0.015px;left:469.7px;">G252301010</div>
<div style="position:absolute;left:469.7px;top:821.9000000000001px;width:143.5px;height:1px;background:#959595"></div>
<div class="t" style="top:809px;font-size:10.4px;line-height:10.4px;color:#555;letter-spacing:0.680px;left:683.7px;">END</div>
<div style="position:absolute;left:683.7px;top:821.9000000000001px;width:144px;height:1px;background:#959595"></div>
<div class="t" style="top:809px;font-size:10.4px;line-height:10.4px;color:#555;letter-spacing:-0.437px;left:882.1999999999999px;">EA</div>
<div style="position:absolute;left:882.1999999999999px;top:821.9000000000001px;width:64px;height:1px;background:#959595"></div>
<div class="t" style="top:809px;font-size:10.4px;line-height:10.4px;color:#555;right:534.1px;text-align:right;">1</div>
<div style="position:absolute;left:973.6999999999999px;top:821.9000000000001px;width:40px;height:1px;background:#959595"></div>
<div class="t" style="top:809px;font-size:10.4px;line-height:10.4px;color:#555;right:447.5px;text-align:right;">14.70</div>
<div style="position:absolute;left:1049.2px;top:821.9000000000001px;width:52px;height:1px;background:#959595"></div>
<div class="t" style="top:809px;font-size:10.4px;line-height:10.4px;color:#555;right:328.29999999999995px;text-align:right;">14.70</div>
<div style="position:absolute;left:1143.9px;top:821.9000000000001px;width:76px;height:1px;background:#959595"></div>
<div class="t" style="top:809px;font-size:10.4px;line-height:10.4px;color:#555;letter-spacing:0.186px;left:1248px;">IAZINT - IA INTRA CO SALES</div>
<div style="position:absolute;left:1248px;top:821.9000000000001px;width:183px;height:1px;background:#959595"></div>
<svg style="position:absolute;left:1420.3px;top:810.1000000000001px;" width="8.2" height="4.4" viewBox="0 0 8.200 4.400"><path d="M0 0 H8.200 L4.100 4.400Z" fill="#555"/></svg>
<svg style="position:absolute;left:1480.2px;top:807.4000000000001px;" width="11.4" height="13" viewBox="0 0 448 512"><path fill="#6b798c" d="M32 464a48 48 0 0 0 48 48h288a48 48 0 0 0 48-48V128H32zm272-256a16 16 0 0 1 32 0v224a16 16 0 0 1-32 0zm-96 0a16 16 0 0 1 32 0v224a16 16 0 0 1-32 0zm-96 0a16 16 0 0 1 32 0v224a16 16 0 0 1-32 0zM432 32H312l-9.400-18.700A24 24 0 0 0 281.100 0H166.800a23.720 23.720 0 0 0-21.400 13.300L136 32H16A16 16 0 0 0 0 48v32a16 16 0 0 0 16 16h416a16 16 0 0 0 16-16V48a16 16 0 0 0-16-16z"/></svg>
<div style="position:absolute;left:208.7px;top:839.2px;width:1296.8px;height:1px;background:#e9ecef"></div>
<div style="position:absolute;left:184px;top:814px;width:1352px;height:18px;background:#eff2f5"></div>
<div class="t ser" style="top:821px;font-size:9.6px;line-height:9.6px;color:#74879c;left:1329px;">Version 1.2.1</div>
<svg style="position:absolute;left:10px;top:138.5px;" width="20" height="19.5" viewBox="0 0 20 19.500"><g fill="none" stroke="#fdf1f1" stroke-width="1"><rect x="0.600" y="0.600" width="18.800" height="12.800" rx="1"/><rect x="2" y="2" width="16" height="10" rx="0.300" stroke-width="0.450" opacity=".85"/></g><path d="M8.300 13.400 H11.700 L12.500 17 H7.500Z" fill="#fdf1f1"/><rect x="5.300" y="17" width="9.400" height="1.600" rx="0.500" fill="#fdf1f1"/><circle cx="5.600" cy="5.600" r="2.700" fill="#fdf1f1"/><path d="M5.600 5.600 V2.900 M5.600 5.600 L7.600 6.800" stroke="#cd1e25" stroke-width="0.700"/><rect x="3.600" y="9.100" width="4.200" height="0.900" fill="#fdf1f1"/><g fill="#fdf1f1"><rect x="10.600" y="6" width="1.300" height="4"/><rect x="12.600" y="4.300" width="1.300" height="5.700"/><rect x="14.600" y="5.300" width="1.300" height="4.700"/><rect x="16.300" y="3.500" width="1" height="6.500"/></g><path d="M10.800 5 L13.200 3 L15.200 4.200 L17 2.300" stroke="#fdf1f1" stroke-width="0.600" fill="none"/></svg>
<svg style="position:absolute;left:8px;top:183px;" width="24" height="26" viewBox="0 0 24 26"><g fill="none" stroke="#fff" stroke-width="1.050"><path d="M7.500 3.800 H5 a1 1 0 0 0 -1 1 V21.300 a1 1 0 0 0 1 1 H13"/><path d="M13.700 3.800 H17 a1 1 0 0 1 1 1 V15"/></g><path d="M7.600 5.200 V3 a0.600 0.600 0 0 1 0.600 -0.600 H9.200 a1.400 1.400 0 0 1 2.800 0 H13 a0.600 0.600 0 0 1 0.600 0.600 V5.200Z" fill="#fff"/><g stroke="#fff" stroke-width="1.050"><path d="M7.400 7.400 H15.300 M7.400 10.600 H15.300 M7.400 13.800 H15.300"/></g><g fill="#fff"><circle cx="5.900" cy="7.400" r="0.650"/><circle cx="5.900" cy="10.600" r="0.650"/><circle cx="5.900" cy="13.800" r="0.650"/></g><circle cx="15.300" cy="18.400" r="2.900" fill="#fff"/><path d="M13.900 18.300 L15.100 19.600 L19.600 15.700" stroke="#cd1e25" stroke-width="2.200" fill="none"/><path d="M13.900 18.300 L15.100 19.600 L19.600 15.700" stroke="#fff" stroke-width="0.900" fill="none"/><path d="M13.900 18.300 L15.100 19.600 L17.300 17.700" stroke="#cd1e25" stroke-width="0.900" fill="none"/></svg>
<svg style="position:absolute;left:11px;top:284.7px;overflow:visible;" width="18.4" height="18.7" viewBox="0 0 18.400 18.700"><g fill="#cd1e25" stroke="#fdf1f1" stroke-width="1.250" stroke-linejoin="round" stroke-linecap="round"><rect x="-6.700" y="-2.050" width="13.400" height="4.100" rx="2.050" transform="translate(5.300 13.100) rotate(-45)"/><path d="M14.820 0.980 L11.500 4.300 Q11 4.800 11.600 5.300 L13 6.700 Q13.500 7.200 14 6.700 L17.220 3.480 A4.600 4.600 0 1 1 14.820 0.980Z"/><path d="M5.600 5.700 L10.400 10.600" fill="none" stroke-width="1.600"/><rect x="-3.600" y="-1.550" width="7.200" height="3.100" rx="1.400" transform="translate(3.400 3.400) rotate(42)"/><rect x="-4.700" y="-2.250" width="9.400" height="4.500" rx="1.300" transform="translate(13.500 13.900) rotate(45)"/></g></svg>
<svg style="position:absolute;left:9px;top:329.5px;overflow:visible;" width="22.2" height="22.5" viewBox="0 0 22.200 22.500"><g fill="#cd1e25" stroke="#fdf1f1" stroke-width="0.950" stroke-linejoin="round"><path d="M11.1 0.6 L16.30 2.95 V9.75 L11.1 12.10 L5.90 9.75 V2.95Z M5.90 2.95 L11.1 5.30 L16.30 2.95 M11.1 5.30 V12.10"/><path d="M13.20 1.55 L8.00 3.90 V5.90 L8.80 5.40 L9.60 6.60 V4.62 L14.80 2.27" stroke-width="0.700"/><path d="M5.9 10.2 L11.10 12.55 V19.35 L5.9 21.70 L0.70 19.35 V12.55Z M0.70 12.55 L5.9 14.90 L11.10 12.55 M5.9 14.90 V21.70"/><path d="M8.00 11.15 L2.80 13.50 V15.50 L3.60 15.00 L4.40 16.20 V14.22 L9.60 11.87" stroke-width="0.700"/><path d="M16.3 10.2 L21.50 12.55 V19.35 L16.3 21.70 L11.10 19.35 V12.55Z M11.10 12.55 L16.3 14.90 L21.50 12.55 M16.3 14.90 V21.70"/><path d="M18.40 11.15 L13.20 13.50 V15.50 L14.00 15.00 L14.80 16.20 V14.22 L20.00 11.87" stroke-width="0.700"/></g></svg>
<svg style="position:absolute;left:10px;top:378px;" width="20" height="18" viewBox="0 0 20 18"><g fill="#fdf1f1"><rect x="0" y="0" width="3.200" height="18" rx="0.500"/><rect x="4.400" y="0" width="1.200" height="18"/><rect x="6.600" y="0" width="0.800" height="18" opacity=".7"/><rect x="8.300" y="0" width="3.100" height="18" rx="0.500"/><rect x="12.300" y="0" width="0.900" height="18" opacity=".8"/><rect x="14" y="0" width="1.400" height="18" opacity=".85"/><rect x="16.200" y="0" width="1" height="18" opacity=".7"/><rect x="18" y="0" width="2" height="18" opacity=".9"/></g></svg>
<svg style="position:absolute;left:11.2px;top:424.5px;" width="17.4" height="17.8" viewBox="0 0 512 512"><path fill="#fff" d="M487.400 315.700l-42.600-24.600c4.300-23.200 4.300-47 0-70.200l42.600-24.600c4.900-2.800 7.100-8.600 5.500-14-11.100-35.600-30-67.800-54.700-94.600-3.800-4.100-10-5.100-14.800-2.300L380.800 110c-17.900-15.400-38.500-27.300-60.800-35.100V25.800c0-5.600-3.900-10.500-9.400-11.700-36.700-8.200-74.300-7.800-109.200 0-5.500 1.200-9.400 6.100-9.400 11.700V75c-22.200 7.900-42.800 19.800-60.800 35.100L88.700 85.500c-4.900-2.800-11-1.900-14.800 2.300-24.700 26.700-43.600 58.900-54.700 94.600-1.700 5.400.6 11.200 5.500 14L67.300 221c-4.300 23.200-4.300 47 0 70.200l-42.600 24.600c-4.900 2.800-7.100 8.600-5.500 14 11.100 35.600 30 67.800 54.700 94.600 3.800 4.100 10 5.100 14.800 2.300l42.600-24.600c17.900 15.400 38.500 27.300 60.800 35.100v49.200c0 5.600 3.900 10.500 9.400 11.700 36.700 8.200 74.300 7.800 109.200 0 5.500-1.200 9.400-6.100 9.400-11.700v-49.200c22.200-7.900 42.800-19.800 60.800-35.100l42.600 24.600c4.900 2.800 11 1.900 14.800-2.300 24.700-26.700 43.600-58.900 54.700-94.600 1.500-5.500-.7-11.300-5.600-14.100zM256 336c-44.100 0-80-35.900-80-80s35.900-80 80-80 80 35.900 80 80-35.900 80-80 80z"/></svg>
</div>
</body>
</html>
